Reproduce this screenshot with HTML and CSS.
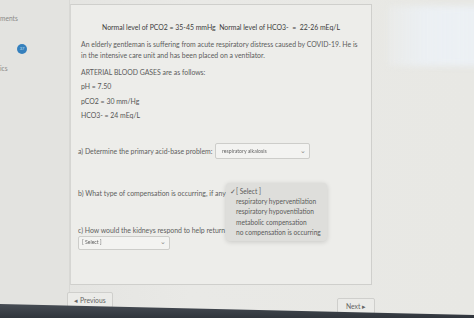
FILE: index.html
```html
<!DOCTYPE html>
<html>
<head>
<meta charset="utf-8">
<link rel="stylesheet" href="styles.css">
</head>
<body>
<div class="screen">
  <aside class="sidebar">
    <div class="nav-item first">ments</div>
    <span class="badge">37</span>
    <div class="nav-item">ics</div>
  </aside>
  <main class="content">
    <section class="card">
      <p class="heading">Normal level of PCO2 = 35-45 mmHg&nbsp; Normal level of HCO3- &nbsp;= &nbsp;22-26 mEq/L</p>
      <p class="para">An elderly gentleman is suffering from acute respiratory distress caused by COVID-19. He is in the intensive care unit and has been placed on a ventilator.</p>
      <p class="para">ARTERIAL BLOOD GASES are as follows:</p>
      <p class="val first">pH = 7.50</p>
      <p class="val">pCO2 = 30 mm/Hg</p>
      <p class="val">HCO3- = 24 mEq/L</p>
      <div class="questions">
        <div class="qa">
          <span class="qtext">a) Determine the primary acid-base problem:</span>
          <div class="select wide"><span class="small">respiratory alkalosis</span><span class="chev">&#8964;</span></div>
        </div>
        <div class="qb">
          <span class="qtext">b) What type of compensation is occurring, if any</span>
          <ul class="menu">
            <li><span class="check">&#10003;</span>[ Select ]</li>
            <li>respiratory hyperventilation</li>
            <li>respiratory hypoventilation</li>
            <li>metabolic compensation</li>
            <li>no compensation is occurring</li>
          </ul>
        </div>
        <div class="qc"><span class="qtext">c) How would the kidneys respond to help return</span></div>
        <div class="select narrow"><span class="small">[ Select ]</span><span class="chev">&#8964;</span></div>
      </div>
    </section>
    <div class="pager">
      <button class="btn prev">&#9666; Previous</button>
      <button class="btn next">Next &#9656;</button>
    </div>
  </main>
  <div class="rightpane"><div class="glare"></div></div>
  <div class="bezel"></div>
</div>
</body>
</html>
```
FILE: styles.css
```css
* { box-sizing: border-box; }
html, body { margin: 0; padding: 0; }
body {
  width: 474px;
  height: 318px;
  overflow: hidden;
  font-family: Lato, "Open Sans", sans-serif;
  color: #555;
  background: #e8e8e5;
}
.screen {
  position: relative;
  display: flex;
  width: 474px;
  height: 318px;
  background: linear-gradient(90deg, #e2e2df 0%, #e9e9e6 40%, #e8e8e4 100%);
}
.sidebar {
  width: 70px;
  flex: none;
  display: flex;
  flex-direction: column;
  border-right: 1px solid #d8d8d5;
  background: #e3e3e0;
}
.nav-item {
  font-size: 6.6px;
  color: #8a8a88;
  line-height: 8px;
}
.nav-item.first { margin-top: 14px; }
.badge {
  margin: 22px 0 0 17px;
  width: 10px;
  height: 10px;
  border-radius: 50%;
  background: #3580bd;
  color: #cfe2f2;
  font-size: 4px;
  line-height: 10px;
  text-align: center;
}
.sidebar .badge + .nav-item { margin-top: 10px; }
.content {
  width: 302px;
  flex: none;
  display: flex;
  flex-direction: column;
}
.card {
  margin-top: 4px;
  border: 1px solid #cfcfcc;
  border-left: 1px solid #d6d6d3;
  background: #ededea;
  padding: 17px 10px 35px 10px;
  height: 281px;
}
p { margin: 0; }
.heading {
  text-align: center;
  font-size: 6.9px;
  line-height: 11px;
  color: #3c3c3c;
}
.para {
  margin-top: 6px;
  font-size: 6.9px;
  line-height: 11px;
  color: #5c5c5c;
}
.val {
  margin-top: 3.5px;
  font-size: 6.9px;
  line-height: 11px;
  color: #555;
}
.val.first { margin-top: 3px; }
.questions {
  display: flex;
  flex-direction: column;
  align-items: flex-start;
  margin-left: -3px;
  font-size: 6.9px;
  line-height: 11px;
}
.qtext {
  color: #5e5e5e;
  white-space: nowrap;
}
.qa {
  display: flex;
  align-items: center;
  gap: 3px;
  margin-top: 22px;
}
.qb {
  position: relative;
  margin-top: 28.5px;
  height: 11px;
}
.qc { margin-top: 26px; height: 11px; }
.select {
  display: flex;
  align-items: center;
  justify-content: space-between;
  border: 1px solid #cdcdca;
  background: #f3f3f1;
  color: #666;
  padding: 0 3px 0 6px;
  border-radius: 2px;
  white-space: nowrap;
}
.select.wide { width: 95px; height: 16px; }
.small { transform: scale(0.75); transform-origin: left center; }
.select.narrow { width: 92px; height: 14px; margin-top: 0; padding-left: 3px; }
.chev { color: #888; line-height: 6px; margin-top: -3px; font-size: 6.6px; }
.menu {
  position: absolute;
  left: 148px;
  top: -4.5px;
  margin: 0;
  padding: 3px 4px 4px 4px;
  list-style: none;
  width: 101px;
  background: #dededb;
  border-radius: 4px;
  box-shadow: 0 1px 5px rgba(0,0,0,0.16);
  font-size: 6.6px;
  line-height: 10.2px;
  color: #5a5a5a;
  z-index: 2;
}
.menu li { padding-left: 6px; white-space: nowrap; }
.menu li:first-child { padding-left: 0; }
.check { display: inline-block; width: 6px; }
.pager {
  display: flex;
  justify-content: space-between;
  align-items: flex-start;
  margin-top: 7px;
  margin-left: -3px;
}
.btn {
  font-family: Lato, sans-serif;
  font-size: 6.8px;
  color: #666;
  background: #ebebe8;
  border: 1px solid #cfcfcc;
  border-radius: 2px;
  padding: 0 6px;
  height: 16px;
  line-height: 12px;
}
.prev { width: 46px; }
.next { margin-top: 6px; width: 38px; margin-right: -3px; }
.rightpane {
  flex: 1;
  position: relative;
  overflow: hidden;
}
.glare {
  margin: 6px -10px 0 16px;
  height: 60px;
  background: linear-gradient(90deg, rgba(238,242,245,0.3), rgba(236,241,246,0.85) 40%, rgba(236,241,246,0.9));
  filter: blur(3px);
}
.bezel {
  position: absolute;
  left: 0;
  bottom: 0;
  width: 474px;
  height: 16px;
  background: linear-gradient(180deg, #4a5058, #30353c);
  clip-path: polygon(0 2px, 100% 13px, 100% 100%, 0 100%);
}
```
